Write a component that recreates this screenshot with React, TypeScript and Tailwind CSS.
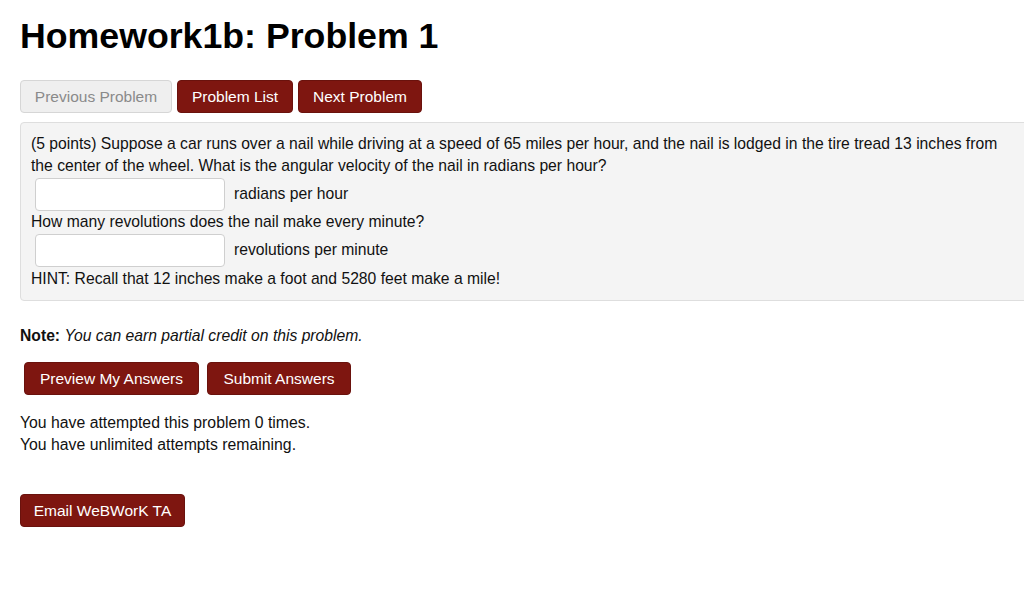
import React from 'react';

const redBtn =
    'h-[33px] px-0 whitespace-nowrap rounded-[4px] bg-[#7e1610] border border-[#6a120d] text-white text-[15.5px] leading-none';

const AnswerRow: React.FC<{ label: string }> = ({ label }) => (
    <div className="flex items-center h-[33px] mt-px">
        <input type="text" className="ml-[4px] w-[190px] h-[33px] bg-white border border-[#cfcfcf] rounded-[4px]" />
        <span className="ml-[9px] -mt-[1px]">{label}</span>
    </div>
);

const App: React.FC = () => {
    return (
        <div className="w-[1024px] h-[597px] overflow-hidden bg-white text-[#111] pl-[20px] font-['Liberation_Sans',Arial,sans-serif]">
            <h1 className="mt-[16px] text-[35.7px] leading-[40px] font-bold text-black">Homework1b: Problem 1</h1>

            <div className="mt-[24px] flex gap-[5px]">
                <button className="h-[33px] w-[152px] whitespace-nowrap rounded-[4px] bg-[#efefef] border border-[#d6d6d6] text-[#8a8a8a] text-[15.5px] leading-none">Previous Problem</button>
                <button className={`${redBtn} w-[116px]`}>Problem List</button>
                <button className={`${redBtn} w-[124px]`}>Next Problem</button>
            </div>

            <div className="mt-[9px] w-[1020px] bg-[#f4f4f4] border border-[#dedede] rounded-[4px] px-[10px] pt-[10px] pb-[10px] text-[15.7px] leading-[22px]">
                <div className="whitespace-nowrap">
                    (5 points) Suppose a car runs over a nail while driving at a speed of 65 miles per hour, and the nail is lodged in the tire tread 13 inches from
                    <br />
                    the center of the wheel. What is the angular velocity of the nail in radians per hour?
                </div>
                <AnswerRow label="radians per hour" />
                <div>How many revolutions does the nail make every minute?</div>
                <AnswerRow label="revolutions per minute" />
                <div className="mt-px">HINT: Recall that 12 inches make a foot and 5280 feet make a mile!</div>
            </div>

            <p className="mt-[24px] text-[15.7px] leading-[22px]">
                <b>Note:</b> <i>You can earn partial credit on this problem.</i>
            </p>

            <div className="mt-[15px] ml-[4px] flex gap-[8px]">
                <button className={`${redBtn} w-[175px]`}>Preview My Answers</button>
                <button className={`${redBtn} w-[144px]`}>Submit Answers</button>
            </div>

            <div className="mt-[17px] text-[15.8px] leading-[22px]">
                <div>You have attempted this problem 0 times.</div>
                <div>You have unlimited attempts remaining.</div>
            </div>

            <button className={`${redBtn} mt-[38px] w-[165px]`}>Email WeBWorK TA</button>
        </div>
    );
};

export default App;
